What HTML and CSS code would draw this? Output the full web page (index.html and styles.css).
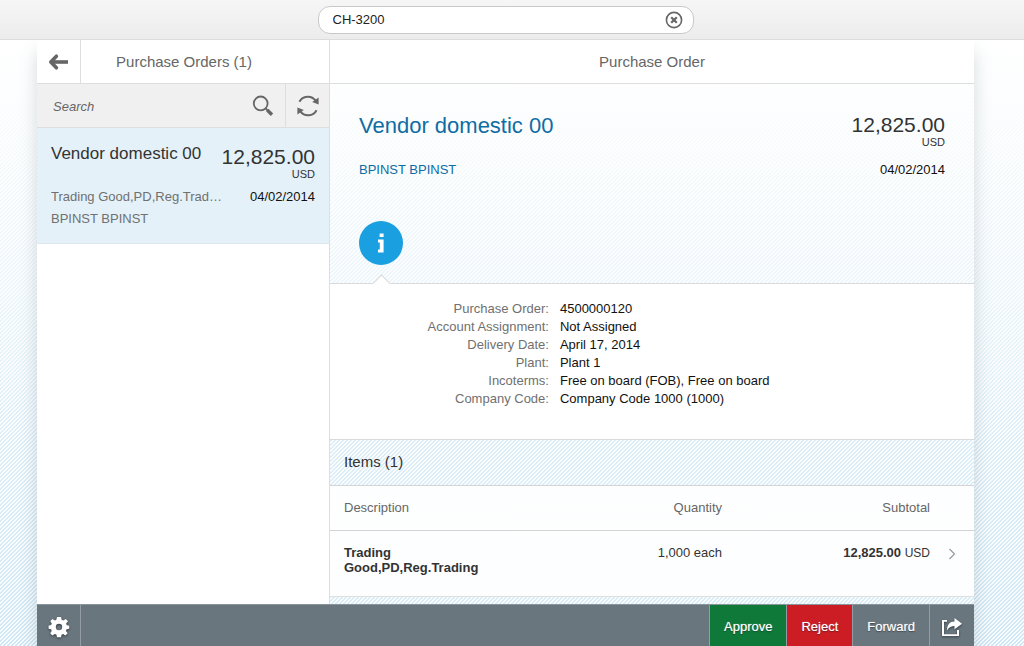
FILE: index.html
```html
<!DOCTYPE html>
<html lang="en">
<head>
<meta charset="utf-8">
<meta name="viewport" content="width=device-width, initial-scale=1">
<title>Purchase Orders</title>
<link rel="stylesheet" href="styles.css">
</head>
<body>
<header class="shell">
  <form class="shell-search">
    <input class="shell-input" type="text" value="CH-3200" aria-label="Search apps">
    <button class="icon-btn clear" type="button" aria-label="Clear">
      <svg width="18" height="18" viewBox="0 0 18 18" fill="none" stroke="#666"><circle cx="9" cy="9" r="7.6" stroke-width="1.6"/><path d="M6.2 6.2l5.6 5.6M11.8 6.2l-5.6 5.6" stroke-width="2.2"/></svg>
    </button>
  </form>
</header>
<div class="stage">
  <div class="app">
    <div class="panes">
      <section class="master">
        <div class="bar">
          <button class="icon-btn back" type="button" aria-label="Back">
            <svg width="22" height="18" viewBox="0 0 22 18" fill="none" stroke="#666" stroke-width="3.6"><path d="M3 9h17" /><path d="M8.400 3.200L2.800 9l5.600 5.800" stroke-linecap="round" stroke-linejoin="round"/></svg>
          </button>
          <h1 class="bar-title">Purchase Orders (1)</h1>
        </div>
        <div class="filter">
          <input class="filter-input" type="text" placeholder="Search" aria-label="Search orders">
          <button class="icon-btn find" type="button" aria-label="Find">
            <svg width="22" height="22" viewBox="0 0 22 22" fill="none" stroke="#666"><circle cx="8.7" cy="8.4" r="6.9" stroke-width="1.8"/><path d="M13.6 13.4l2 2" stroke-width="2"/><path d="M15.2 15l4.800 4.800" stroke-width="3.400"/></svg>
          </button>
          <button class="icon-btn refresh" type="button" aria-label="Refresh">
            <svg width="24" height="24" viewBox="0 0 24 24" fill="none" stroke="#666" stroke-width="1.900"><path d="M3.400 7.800A9.600 9.600 0 0 1 19.600 6.600M20.600 16.200A9.600 9.600 0 0 1 4.400 17.400"/><path d="M22.600 3.400v7l-6.400-2.300zM1.400 20.600v-7l6.400 2.300z" fill="#666" stroke="none"/></svg>
          </button>
        </div>
        <a class="order" href="#order">
          <span class="row">
            <span class="order-name">Vendor domestic 00</span>
            <span class="amount"><span class="amount-value">12,825.00</span><span class="unit">USD</span></span>
          </span>
          <span class="row order-meta">
            <span class="order-text">Trading Good,PD,Reg.Trading</span>
            <span class="date">04/02/2014</span>
          </span>
          <span class="order-text order-by">BPINST BPINST</span>
        </a>
      </section>
      <main class="detail" id="order">
        <div class="bar"><h2 class="bar-title">Purchase Order</h2></div>
        <section class="summary">
          <div class="row">
            <a class="vendor" href="#vendor">Vendor domestic 00</a>
            <span class="amount"><span class="amount-value">12,825.00</span><span class="unit">USD</span></span>
          </div>
          <div class="row summary-meta">
            <a class="person" href="#person">BPINST BPINST</a>
            <span class="date">04/02/2014</span>
          </div>
          <button class="tab" type="button" aria-label="Information">
            <svg width="8" height="20" viewBox="0 0 8 20" fill="#fff"><path d="M2.600 0.500h4v3.500h-4zM1 6.500h5.600v13H1v-3h1.800V9.500H1z"/></svg>
          </button>
        </section>
        <dl class="facts">
          <dt>Purchase Order:</dt><dd>4500000120</dd>
          <dt>Account Assignment:</dt><dd>Not Assigned</dd>
          <dt>Delivery Date:</dt><dd>April 17, 2014</dd>
          <dt>Plant:</dt><dd>Plant 1</dd>
          <dt>Incoterms:</dt><dd>Free on board (FOB), Free on board</dd>
          <dt>Company Code:</dt><dd>Company Code 1000 (1000)</dd>
        </dl>
        <section class="items">
          <h3 class="items-title">Items (1)</h3>
          <table class="table">
            <thead>
              <tr><th class="c-desc">Description</th><th class="c-num">Quantity</th><th class="c-num c-sub">Subtotal</th><th class="c-nav"></th></tr>
            </thead>
            <tbody>
              <tr>
                <td class="c-desc strong">Trading Good,PD,Reg.Trading</td>
                <td class="c-num">1,000 each</td>
                <td class="c-num"><span class="strong">12,825.00</span> <span class="small">USD</span></td>
                <td class="c-nav"><svg width="8" height="12" viewBox="0 0 8 12" fill="none" stroke="#999" stroke-width="1.2"><path d="M1.500 1l5 5-5 5"/></svg></td>
              </tr>
            </tbody>
          </table>
        </section>
      </main>
    </div>
    <footer class="toolbar">
      <button class="tool settings" type="button" aria-label="Settings">
        <svg width="22" height="22" viewBox="-11 -11 22 22" fill="#fff"><path fill-rule="evenodd" d="M-2-10h4l.6 2.800 1.800.7L6.800-8 9-5.800 7.100-3.400l.6 1.600 2.500.5v3.100l-2.600.5-.7 1.700L8.600 6.200 6.400 8.500 4.200 7l-1.700.7L2 10.200h-4l-.6-2.600L-4.300 7l-2.300 1.500-2.200-2.200L-7.300 4l-.6-1.700-2.500-.5v-3.100l2.500-.6.7-1.600L-8.700-5.900-6.500-8l2.300 1.500 1.600-.7zM0-3.200a3.200 3.200 0 1 0 0 6.400a3.200 3.200 0 1 0 0-6.400z"/></svg>
      </button>
      <div class="actions">
        <button class="tool approve" type="button">Approve</button>
        <button class="tool reject" type="button">Reject</button>
        <button class="tool" type="button">Forward</button>
        <button class="tool share" type="button" aria-label="Share">
          <svg width="22" height="20" viewBox="0 0 22 20" fill="#fff"><path d="M1 3h5v1.800H3v12.400h13V13h2v6H1z"/><path d="M6 13.500C6 7.500 9 4.500 13.500 4.500V1L21 6.700l-7.500 5.600V9C10.500 9 8 10 6 13.500z"/></svg>
        </button>
      </div>
    </footer>
  </div>
</div>
</body>
</html>
```
FILE: styles.css
```css
* { box-sizing: border-box; }
:root {
  --stripes: linear-gradient(135deg, #cfe7f4 25%, #f8fcfe 25% 50%, #cfe7f4 50% 75%, #f8fcfe 75%) 0 0 / 4px 4px;
}
body {
  margin: 0;
  height: 100vh;
  display: flex;
  flex-direction: column;
  font: 13px/18px "Liberation Sans", Arial, sans-serif;
  color: #333;
}
h1, h2, h3, dl, dd { margin: 0; font-weight: normal; }
button, input { font: inherit; border: 0; padding: 0; background: none; }
a { text-decoration: none; }

.shell {
  height: 40px;
  flex: none;
  display: flex;
  justify-content: center;
  align-items: center;
  padding: 0 50px 0 37px;
  background: linear-gradient(#f6f6f6, #ececec);
  border-bottom: 1px solid #dcdcdc;
}
.shell-search {
  flex: 0 1 376px;
  height: 28px;
  display: flex;
  align-items: center;
  padding: 0 10px 0 14px;
  background: #fff;
  border: 1px solid #c8c8c8;
  border-radius: 12px;
}
.shell-input { flex: 1; min-width: 0; color: #222; }
.icon-btn { display: flex; align-items: center; justify-content: center; }

.stage {
  flex: 1;
  min-height: 0;
  display: flex;
  padding: 0 50px 0 37px;
  background: linear-gradient(#fff, rgba(255, 255, 255, 0)), var(--stripes);
}
.app {
  flex: 1;
  min-width: 0;
  display: flex;
  flex-direction: column;
  background: #fff;
  box-shadow: 0 12px 16px rgba(90, 110, 125, 0.25);
  clip-path: inset(0 -24px);
}
.panes { flex: 1; min-height: 0; display: flex; }
.master { flex: 0 0 293px; min-width: 0; border-right: 1px solid #dedede; }
.detail { flex: 1; min-width: 0; display: flex; flex-direction: column; }

.bar { height: 44px; flex: none; display: flex; border-bottom: 1px solid #dedede; }
.bar-title { flex: 1; text-align: center; font-size: 15px; line-height: 44px; color: #666; }
.back { width: 44px; border-right: 1px solid #dedede; }
.master .bar-title { padding-right: 42px; }

.filter { height: 44px; display: flex; background: #f0f0f0; border-bottom: 1px solid #dedede; }
.filter-input { flex: 1; min-width: 0; padding: 2px 0 0 16px; }
.filter-input::placeholder { color: #666; font-style: italic; opacity: 1; }
.find { width: 44px; }
.refresh { width: 44px; border-left: 1px solid #dedede; }

.row { display: flex; justify-content: space-between; gap: 12px; }
.order {
  display: block;
  padding: 16px 14px 15px;
  color: #333;
  background: #e4f1f9;
  border-bottom: 1px solid #dce7ee;
}
.order-name { font-size: 17px; line-height: 20px; white-space: nowrap; }
.amount { display: flex; flex-direction: column; align-items: flex-end; }
.amount-value {
  font-size: 21px;
  line-height: 25px;
}
.unit { font-size: 11px; line-height: 11px; }
.order-meta { padding-top: 8px; gap: 26px; }
.order-text { min-width: 0; color: #707070; white-space: nowrap; overflow: hidden; text-overflow: ellipsis; }
.order-by { display: block; padding-top: 4px; }
.date { color: #111; }

.summary {
  flex: none;
  height: 200px;
  padding: 28px 29px 0;
  border-bottom: 1px solid #dadada;
  background: linear-gradient(rgba(255, 255, 255, 0.95), rgba(255, 255, 255, 0.6)), var(--stripes);
}
.vendor { font-size: 22px; line-height: 28px; color: #0f6ca3; }
.person { color: #0f6ca3; }
.summary-meta { padding-top: 13px; }
.tab {
  position: relative;
  width: 44px;
  height: 44px;
  display: flex;
  align-items: center;
  justify-content: center;
  margin-top: 42px;
  border-radius: 50%;
  background: #1a9fe0;
}
.tab::after {
  content: "";
  position: absolute;
  left: 16px;
  top: 56px;
  width: 12px;
  height: 12px;
  transform: rotate(45deg);
  background: #fff;
  border: solid #dadada;
  border-width: 1px 0 0 1px;
}

.facts {
  position: relative;
  display: grid;
  grid-template-columns: 34% 1fr;
  column-gap: 11px;
  padding: 16px 0 31px;
  background: #fff;
}
.facts dt { text-align: right; color: #707070; }
.facts dd { color: #111; }

.items {
  flex: 1;
  min-height: 0;
  background: linear-gradient(rgba(255, 255, 255, 0.3), rgba(255, 255, 255, 0.2)), var(--stripes);
  border-top: 1px solid #dadada;
}
.items-title { padding: 0 0 1px 14px; font-size: 15px; line-height: 44px; }
.table { width: 100%; table-layout: fixed; border-collapse: collapse; background: rgba(255, 255, 255, 0.9); }
.table tr { border-top: 1px solid #d4d4d4; }
.table tbody { border-bottom: 1px solid #e0e0e0; }
.table th { height: 45px; padding: 0; font-weight: normal; color: #666; }
.table td { height: 66px; padding: 14px 0 0; vertical-align: top; line-height: 15px; }
.table .c-desc { width: 28%; padding-left: 14px; text-align: left; }
.table .c-num { text-align: right; }
.table .c-sub { width: 208px; }
.table .c-nav { width: 44px; text-align: center; }
.c-nav svg { vertical-align: middle; }
.strong { font-weight: bold; }
.small { font-size: 12px; }

.toolbar {
  flex: none;
  height: 42px;
  display: flex;
  justify-content: space-between;
  background: #69767e;
  border-top: 1px solid #8a959b;
}
.actions { display: flex; }
.tool {
  display: flex;
  align-items: center;
  justify-content: center;
  padding: 2px 14px 0;
  color: #fff;
  text-shadow: 0 0 1px rgba(255, 255, 255, 0.6), 0 1px 1px rgba(0, 0, 0, 0.5);
  border-left: 1px solid #939da3;
}
.settings { width: 44px; padding: 2px 0 0; border-left: 0; border-right: 1px solid #939da3; }
.share { width: 45px; padding: 2px 0 0; }
.tool svg { filter: drop-shadow(0 1px 1px rgba(0, 0, 0, 0.5)); }
.approve { background: #0f793a; }
.reject { background: #cc1c24; }
```
